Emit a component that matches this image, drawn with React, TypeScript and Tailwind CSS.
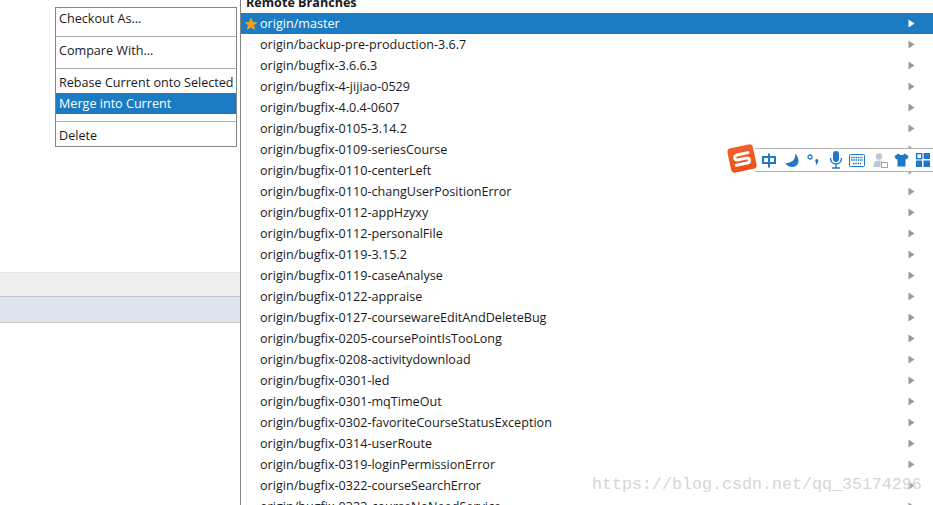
import React from 'react';

const branches = [
    'origin/backup-pre-production-3.6.7',
    'origin/bugfix-3.6.6.3',
    'origin/bugfix-4-jijiao-0529',
    'origin/bugfix-4.0.4-0607',
    'origin/bugfix-0105-3.14.2',
    'origin/bugfix-0109-seriesCourse',
    'origin/bugfix-0110-centerLeft',
    'origin/bugfix-0110-changUserPositionError',
    'origin/bugfix-0112-appHzyxy',
    'origin/bugfix-0112-personalFile',
    'origin/bugfix-0119-3.15.2',
    'origin/bugfix-0119-caseAnalyse',
    'origin/bugfix-0122-appraise',
    'origin/bugfix-0127-coursewareEditAndDeleteBug',
    'origin/bugfix-0205-coursePointIsTooLong',
    'origin/bugfix-0208-activitydownload',
    'origin/bugfix-0301-led',
    'origin/bugfix-0301-mqTimeOut',
    'origin/bugfix-0302-favoriteCourseStatusException',
    'origin/bugfix-0314-userRoute',
    'origin/bugfix-0319-loginPermissionError',
    'origin/bugfix-0322-courseSearchError',
    'origin/bugfix-0323-courseNoNeedService',
];

const Arrow = ({ active }: { active?: boolean }) => (
    <svg width="7" height="9" viewBox="0 0 7 9" className="shrink-0">
        <path d="M0.5 0.5 L6.5 4.5 L0.5 8.5 Z" fill={active ? '#ffffff' : '#9a9a9a'} />
    </svg>
);

const ImeBar = () => (
    <div className="absolute left-[728px] top-[148px] w-[205px] flex items-start">
        <div className="w-[26px] h-[25px] shrink-0 ml-[1px] -mt-[2px] -rotate-12 rounded-[4px] bg-gradient-to-b from-[#f2612c] to-[#ee4f12] flex items-center justify-center z-10">
            <svg width="20" height="16" viewBox="0 0 20 16">
                <path d="M17 3 H6 Q3 3 3 5.5 T6 8 H14 Q17 8 17 10.5 T14 13 H3" fill="none" stroke="#ffffff" strokeWidth="3" strokeLinecap="round" />
            </svg>
        </div>
        <div className="flex-1 h-[24px] bg-white border-y border-[#b4b4b4] flex items-center pl-[7px]">
            <svg width="14" height="15" viewBox="0 0 14 15" className="shrink-0">
                <path d="M1 4 H13 V10 H1 Z M7 0.5 V14.5" fill="none" stroke="#1f78c8" strokeWidth="2" />
            </svg>
            <svg width="15" height="15" viewBox="0 0 15 15" className="shrink-0 ml-[9px]">
                <path d="M10 0.5 C11 6 7 10 0.5 10 C2.5 14.5 9.5 15.5 12.5 11.5 C14.5 8.5 13.5 3.5 10 0.5 Z" fill="#1f78c8" />
            </svg>
            <svg width="12" height="14" viewBox="0 0 12 14" className="shrink-0 ml-[7px]">
                <circle cx="3" cy="4" r="2" fill="none" stroke="#1f78c8" strokeWidth="1.3" />
                <path d="M9.5 6 C11.5 6 11.5 8 11 9.5 L8.5 13 C9.5 11 9 10 8.5 9 C8 7.5 8.5 6 9.5 6 Z" fill="#1f78c8" />
            </svg>
            <svg width="14" height="18" viewBox="0 0 14 18" className="shrink-0 ml-[10px]">
                <rect x="4" y="0" width="6" height="11" rx="3" fill="#1f78c8" />
                <path d="M1.5 7 C1.5 15 12.5 15 12.5 7 M7 13 V17 M3 17 H11" fill="none" stroke="#1f78c8" strokeWidth="1.4" />
            </svg>
            <svg width="16" height="13" viewBox="0 0 16 13" className="shrink-0 ml-[6px]">
                <rect x="0.5" y="0.5" width="15" height="12" rx="1" fill="none" stroke="#1f78c8" />
                <path d="M2 3.5 H14 M2 6 H14 M4 9.5 H12" fill="none" stroke="#1f78c8" strokeWidth="1.6" strokeDasharray="1.5 0.8" />
            </svg>
            <svg width="15" height="15" viewBox="0 0 15 15" className="shrink-0 ml-[8px]">
                <circle cx="6" cy="3.5" r="3.2" fill="#b9c6d8" />
                <path d="M0.5 14 C0.5 8 3.5 7.5 6 7.5 C7.5 7.5 8.5 8 9.5 9 H7.5 V14 Z" fill="#b9c6d8" />
                <rect x="8.5" y="9.5" width="6" height="5" fill="#ffffff" stroke="#9aa6b4" />
            </svg>
            <svg width="15" height="14" viewBox="0 0 15 14" className="shrink-0 ml-[6px]">
                <path d="M4.5 0.5 L0.5 3 L2 6.5 L3.5 6 V13.5 H11.5 V6 L13 6.5 L14.5 3 L10.5 0.5 C9.5 2.5 5.5 2.5 4.5 0.5 Z" fill="#1f78c8" />
            </svg>
            <svg width="14" height="14" viewBox="0 0 14 14" className="shrink-0 ml-[7px]">
                <rect x="0.7" y="0.7" width="5" height="5" fill="none" stroke="#1f78c8" strokeWidth="1.4" />
                <rect x="7.5" y="0" width="6.5" height="6" fill="#1f78c8" />
                <rect x="0" y="7.5" width="6" height="6.5" fill="#1f78c8" />
                <rect x="7.5" y="7.5" width="6.5" height="6.5" fill="#1f78c8" />
            </svg>
        </div>
    </div>
);

const App = () => {
    return (
        <div className="relative w-[933px] h-[505px] overflow-hidden bg-white flex text-[12.6px] text-[#1a1a1a] font-['Open_Sans','Noto_Sans',sans-serif]">
            <div className="w-[240px] shrink-0 pt-[7px]">
                <div className="ml-[55px] w-[182px] h-[140px] border border-[#858585] bg-white flex flex-col">
                    <div className="h-[21px] shrink-0 pl-[3px] pt-[2px] flex items-center">Checkout As...</div>
                    <div className="h-[1px] shrink-0 mt-[7px] bg-[#b0b0b0]" />
                    <div className="h-[21px] shrink-0 mt-[3px] pl-[3px] pt-[2px] flex items-center">Compare With...</div>
                    <div className="h-[1px] shrink-0 mt-[7px] bg-[#b0b0b0]" />
                    <div className="h-[21px] shrink-0 mt-[3px] pl-[3px] pt-[2px] flex items-center whitespace-nowrap">Rebase Current onto Selected</div>
                    <div className="h-[21px] shrink-0 pl-[3px] pt-[2px] flex items-center bg-[#1b7bc3] text-white">Merge into Current</div>
                    <div className="h-[1px] shrink-0 mt-[7px] bg-[#b0b0b0]" />
                    <div className="h-[21px] shrink-0 mt-[3px] pl-[3px] pt-[2px] flex items-center">Delete</div>
                </div>
                <div className="mt-[125px] h-[24px] bg-[#efefef] border-t border-[#e4e4e4]" />
                <div className="h-[27px] bg-[#e0e4ec] border-y border-[#c8c8c8]" />
            </div>
            <div className="flex-1 border-l border-[#858585] flex flex-col">
                <div className="h-[13px] shrink-0 pl-[5px] pb-[4px] flex items-end font-bold leading-[13px] whitespace-nowrap">Remote Branches</div>
                <div className="h-[21px] shrink-0 bg-[#1b7bc3] text-white flex items-center">
                    <svg width="14" height="14" viewBox="0 0 14 14" className="ml-[3px] mr-[2px] shrink-0">
                        <path d="M7 0.5 L9 5 L13.5 5.3 L10 8.3 L11.2 13 L7 10.4 L2.8 13 L4 8.3 L0.5 5.3 L5 5 Z" fill="#f0a020" />
                    </svg>
                    <span className="flex-1 pt-[2px]">origin/master</span>
                    <span className="mr-[18px] flex"><Arrow active /></span>
                </div>
                {branches.map((name) => (
                    <div key={name} className="h-[21px] shrink-0 pl-[19px] pr-[18px] flex items-center justify-between">
                        <span className="whitespace-nowrap pt-[2px]">{name}</span>
                        <Arrow />
                    </div>
                ))}
            </div>
            <ImeBar />
            <div className="absolute left-[592px] top-[475px] text-[16.67px] leading-[20px] text-[#d6d6d0] whitespace-nowrap font-['Liberation_Mono',monospace]">
                https://blog.csdn.net/qq_35174296
            </div>
        </div>
    );
};

export default App;
